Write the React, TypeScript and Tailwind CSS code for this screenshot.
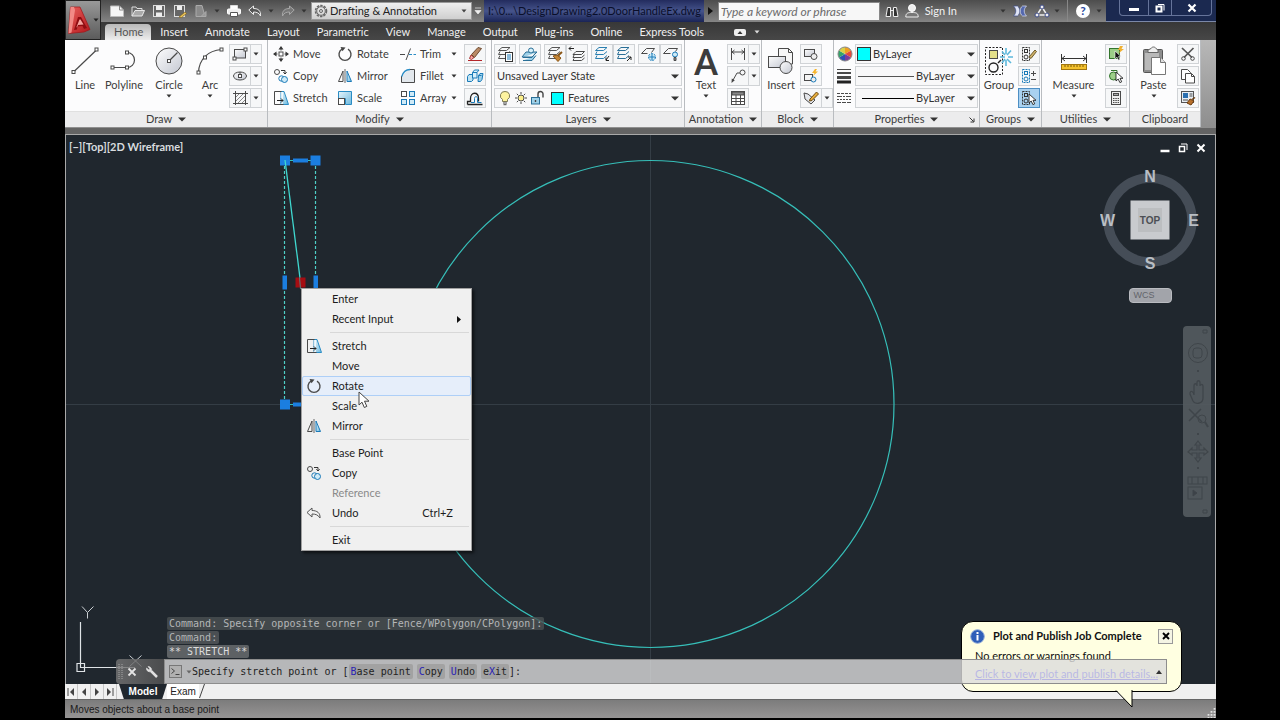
import React from "react";

type Kids = { children?: React.ReactNode };

function Svg({ w, h, children, className = "" }: Kids & { w: number; h: number; className?: string }) {
  return (
    <svg width={w} height={h} viewBox={`0 0 ${w} ${h}`} fill="none" stroke="#4a4a4a" aria-hidden="true" className={`shrink-0 ${className}`}>
      {children}
    </svg>
  );
}

function Caret({ className = "text-[#333]" }: { className?: string }) {
  return (
    <Svg w={6} h={4} className={className}>
      <path d="M0.5 0.5h5L3 3.5z" fill="currentColor" stroke="none" />
    </Svg>
  );
}

function BigCaret() {
  return (
    <Svg w={8} h={5} className="text-[#333]">
      <path d="M0 0.5h8L4 4.5z" fill="currentColor" stroke="none" />
    </Svg>
  );
}

const node = (x: number, y: number) => <rect x={x - 1.5} y={y - 1.5} width="3" height="3" fill="#fff" />;

const grad = (
  <svg width="0" height="0" className="absolute" aria-hidden="true">
    <defs>
      <linearGradient id="metal" x1="0" y1="0" x2="1" y2="1">
        <stop offset="0" stopColor="#fdfdfd" />
        <stop offset="1" stopColor="#c4c8d2" />
      </linearGradient>
      <linearGradient id="sky" x1="0" y1="0" x2="1" y2="1">
        <stop offset="0" stopColor="#e8f6fc" />
        <stop offset="1" stopColor="#6db8dd" />
      </linearGradient>
      <linearGradient id="red" x1="0" y1="0" x2="1" y2="1">
        <stop offset="0" stopColor="#e8605c" />
        <stop offset="1" stopColor="#b3161c" />
      </linearGradient>
    </defs>
  </svg>
);

/* ---------- Draw ---------- */
const LineIcon = () => (
  <Svg w={28} h={28}>
    <path d="M2.5 25L26 2.500" strokeWidth="1.2" />
    {node(2.5, 25)}
    {node(25.5, 2.500)}
  </Svg>
);
const PolylineIcon = () => (
  <Svg w={28} h={28}>
    <path d="M2.500 20.5H17a7.500 7.500 0 0 0 0-15h-.5" strokeWidth="1.2" />
    {node(2.5, 20.5)}
    {node(17, 20.5)}
    {node(17, 5.5)}
  </Svg>
);
const CircleIcon = () => (
  <Svg w={28} h={28}>
    <circle cx="14" cy="14" r="13" fill="url(#metal)" />
    <path d="M14 14l8.500-8.500" strokeWidth="1.2" />
    {node(14, 14)}
  </Svg>
);
const ArcIcon = () => (
  <Svg w={28} h={28}>
    <path d="M2.500 25.500C3 12 12 3.500 25.500 2.500" strokeWidth="1.2" />
    {node(2.5, 25.5)}
    {node(9, 10.5)}
    {node(25.5, 2.5)}
  </Svg>
);
const RectIcon = () => (
  <Svg w={16} h={14}>
    <rect x="2.500" y="2.500" width="11" height="8.500" fill="url(#metal)" />
    {node(2.5, 11.5)}
    {node(13.5, 2.5)}
  </Svg>
);
const EllipseIcon = () => (
  <Svg w={16} h={14}>
    <ellipse cx="8" cy="7" rx="6.500" ry="4" fill="url(#metal)" />
    <path d="M8 7V3" />
    {node(8, 7)}
  </Svg>
);
const HatchIcon = () => (
  <Svg w={16} h={14}>
    <path d="M3.500 0v14M13.500 0v14M1 2.500h15M1 12.500h15" />
    <path d="M4 6l3-3M4 10l7-7M6 12l7-7M10 12l3-3" stroke="#888" />
  </Svg>
);

/* ---------- Modify ---------- */
const MoveIcon = () => (
  <Svg w={16} h={16}>
    <rect x="6" y="6" width="4" height="4" />
    <path d="M8 0l2.500 3.500h-5zM8 16l2.500-3.500h-5zM0 8l3.500-2.500v5zM16 8l-3.500-2.500v5z" fill="#333" stroke="none" />
    <path d="M8 2.500v2M8 11.500v2M2.500 8h2M11.500 8h2" />
  </Svg>
);
const CopyIcon = () => (
  <Svg w={16} h={16}>
    <circle cx="4" cy="4" r="2.500" />
    <circle cx="8.500" cy="10.500" r="2.700" stroke="#1a7ab8" />
    <circle cx="11.500" cy="11.500" r="3" stroke="#1a7ab8" fill="#cfeaf7" />
    <path d="M8 2.500h4v3M10.300 4.300L12 6l1.700-1.700" stroke="#333" />
  </Svg>
);
const StretchIcon = () => (
  <Svg w={16} h={16}>
    <path d="M8 1.500h3L15.500 14.500H8z" fill="url(#sky)" stroke="#2a8cc4" />
    <path d="M8.500 1.500h-7v13h9" />
    <path d="M9 2v12" stroke="#fff" strokeWidth="1.500" />
    <path d="M4 10.500h6M8 8.500l2 2-2 2" stroke="#222" />
  </Svg>
);
const RotateIcon = () => (
  <Svg w={16} h={16}>
    <path d="M11 3.200A6 6 0 1 1 5 3.200" strokeWidth="1.400" />
    <path d="M3.500 1l5 .6-3 3.600z" fill="#444" stroke="none" />
  </Svg>
);
const MirrorIcon = () => (
  <Svg w={16} h={16}>
    <path d="M6 3v10.500H1.500z" />
    <path d="M10 3v10.500h4.500z" fill="url(#sky)" stroke="#1a7ab8" />
    <path d="M8 1v14" stroke="#666" />
  </Svg>
);
const ScaleIcon = () => (
  <Svg w={16} h={16}>
    <path d="M1.500 1.500h13v13h-6v-6h-7z" fill="url(#sky)" stroke="#2a8cc4" />
    <rect x="1.500" y="8.500" width="6" height="6" fill="#fff" />
  </Svg>
);
const TrimIcon = () => (
  <Svg w={16} h={16}>
    <path d="M0 8.500h5M10.500 2.500L6 14" />
    <path d="M9 8.500h7" stroke="#2a8cc4" strokeDasharray="3 1.500" />
  </Svg>
);
const FilletIcon = () => (
  <Svg w={16} h={16}>
    <path d="M1.500 15C1.500 6 6 1.500 14.500 1.500V15z" fill="#e3e8ed" stroke="none" />
    <path d="M1.500 9C3 4 6 1.500 10 1.500" stroke="#2a8cc4" strokeWidth="1.300" />
    <path d="M1.500 8.500v6h13v-13H10" />
  </Svg>
);
const ArrayIcon = () => (
  <Svg w={16} h={16}>
    <rect x="1.500" y="1.500" width="5" height="5" fill="#fff" />
    <rect x="9.500" y="1.500" width="5" height="5" fill="#cfeaf7" stroke="#1a7ab8" />
    <rect x="1.500" y="9.500" width="5" height="5" fill="#cfeaf7" stroke="#1a7ab8" />
    <rect x="9.500" y="9.500" width="5" height="5" fill="#cfeaf7" stroke="#1a7ab8" />
  </Svg>
);
const EraseIcon = () => (
  <Svg w={16} h={16}>
    <path d="M1 14.500h14" stroke="#b3262a" />
    <path d="M2.500 12.500L4 9l3 2.500-2.500 2z" fill="#f3a9a0" stroke="#a33" />
    <path d="M4.500 8.500L11 1.500l3.500 1-7 9z" fill="#b98a66" stroke="#6e4a30" />
  </Svg>
);
const ExplodeIcon = () => (
  <Svg w={18} h={16} className="text-[#1a7ab8]">
    <path d="M1.500 8.500l1.500-2h4V12l-1.500 1.500h-4z" fill="#bfe3f3" stroke="currentColor" />
    <path d="M6.500 4.500l2-2.500H13l-2 2.500V10H6.500zM11 4.500H6.500" fill="#d9f0fa" stroke="currentColor" />
    <path d="M12.500 7.500l1.500-2h3l-1 6-1.500 2h-2.500zM12.500 7.500h3" fill="#9fd2ea" stroke="currentColor" />
  </Svg>
);
const OffsetIcon = () => (
  <Svg w={18} h={16}>
    <path d="M1.500 14.500h15M1.500 14.500V11.500h3V8.500c0-7 8-7 8 0v3" stroke="#222" strokeWidth="1.300" />
    <path d="M5 12.500h3.500V8.500c0-2.500 3-2.500 3 0V12.500h4" stroke="#1a7ab8" />
  </Svg>
);

/* ---------- Layers ---------- */
function Sheets({ tone = "#555", children }: Kids & { tone?: string }) {
  return (
    <Svg w={18} h={16}>
      <path d="M6 1.500h8l-3.500 3h-8zM4 5.500l-1.500 3h8l3.500-3M4 9.500l-1.500 3h8l3.500-3" stroke={tone} fill="none" />
      {children}
    </Svg>
  );
}
const LayerProps = () => (
  <Sheets>
    <rect x="9.500" y="6.500" width="7" height="9" fill="#fff" stroke="#333" />
    <path d="M11 9h4M11 11h4M11 13h4" stroke="#1a7ab8" />
  </Sheets>
);
const LayerOff = () => (
  <Svg w={18} h={16}>
    <path d="M2 14.500h9l4-5M2 11.500h9l4-5M5 6h11l-5 5H1z" fill="#9fd2ea" stroke="#2a6f97" />
    <circle cx="10" cy="4.500" r="2.500" fill="#d7f0fa" stroke="#2a6f97" />
  </Svg>
);
const LayerMatch = () => (
  <Sheets>
    <path d="M7 10l4-1 4 3-3 3.500z" fill="#c58636" stroke="#8a5413" />
    <path d="M12 9.500L16 6" stroke="#8a5413" strokeWidth="2" />
  </Sheets>
);
const LayerPrev = () => (
  <Svg w={18} h={16}>
    <path d="M8 5.500h8.500l-3 3H5zM6 9l-1 2.500h8.500l3-2.500M6 12.500l-1 2h8.500l3-2.500" />
    <path d="M1 2.500h5M3 .5l-2 2 2 2" stroke="#222" />
  </Svg>
);
const LayerIso = () => (
  <Sheets tone="#2a7fb0">
    <path d="M16 10l-3 4M13 11.500V14.500h3" stroke="#222" />
  </Sheets>
);
const LayerUniso = () => (
  <Sheets tone="#2a6f97">
    <path d="M12 15l4-4M13 11h3v3" stroke="#222" />
  </Sheets>
);
const LayerFreeze = () => (
  <Svg w={18} h={16}>
    <path d="M1.500 7.500h6M1.500 7.500l5-5h8l-3 4" />
    <circle cx="12" cy="11" r="3.500" fill="#cdeaf6" stroke="#1a7ab8" strokeDasharray="2 1" />
    <path d="M12 8v6M9 11h6" stroke="#1a7ab8" />
  </Svg>
);
const LayerLamp = () => (
  <Svg w={18} h={16}>
    <path d="M1.500 7.500h7M1.500 7.500l5-5h9l-2 3" />
    <circle cx="13" cy="8.500" r="2.500" fill="#cdeaf6" stroke="#1a7ab8" />
    <path d="M12 11.500h2v3h-2z" fill="#888" />
  </Svg>
);
const Bulb = () => (
  <Svg w={14} h={16}>
    <path d="M7 1.500a4.300 4.300 0 0 0-2.500 8v2h5v-2A4.300 4.300 0 0 0 7 1.500z" fill="#fdf3a0" stroke="#7d7a55" />
    <path d="M5 13h4M5.500 14.700h3" />
  </Svg>
);
const Sun = () => (
  <Svg w={14} h={16}>
    <circle cx="7" cy="8" r="3" fill="#fdf08a" />
    <path d="M7 2v2M7 12v2M1 8h2M11 8h2M2.800 3.800l1.400 1.400M9.800 10.800l1.400 1.400M2.800 12.200l1.400-1.400M9.800 5.200l1.400-1.400" />
  </Svg>
);
const Lock = () => (
  <Svg w={15} h={16}>
    <rect x="1.500" y="7.500" width="8" height="6.500" fill="#9fd2ea" stroke="#2a6f97" />
    <path d="M8 7V4a2.500 2.500 0 0 1 5 0v3.500M5.500 10v2" stroke="#444" strokeWidth="1.400" />
  </Svg>
);

/* ---------- Annotation / Block ---------- */
const DimIcon = () => (
  <Svg w={16} h={14}>
    <path d="M1.500 1v12M14.500 1v12M2 5h12M4.500 3L2 5l2.500 2M11.500 3L14 5l-2.500 2" />
  </Svg>
);
const LeaderIcon = () => (
  <Svg w={16} h={14}>
    <circle cx="12.500" cy="3.500" r="2.500" />
    <path d="M10 4H7L2.500 12" />
    <path d="M1.500 14l.3-4.500 3 1.700z" fill="#444" stroke="none" />
  </Svg>
);
const TableIcon = () => (
  <Svg w={16} h={14}>
    <rect x="1.500" y=".5" width="13" height="13" fill="#fff" />
    <path d="M2 1h12v3H2z" fill="#888" />
    <path d="M1.500 7.500h13M1.500 10.500h13M6 4v9M10.500 4v9" />
  </Svg>
);
const InsertIcon = () => (
  <Svg w={28} h={28}>
    <path d="M11.500 1.500h10l4 4V17h-14z" fill="#f6f6f6" />
    <path d="M21.500 1.500v4h4" />
    <rect x="1.500" y="9.500" width="17" height="11" fill="url(#metal)" />
    <circle cx="19" cy="20.500" r="6" fill="url(#metal)" />
  </Svg>
);
const BlockCreate = () => (
  <Svg w={16} h={14}>
    <rect x="1.500" y="2.500" width="10" height="7" fill="url(#metal)" />
    <circle cx="11" cy="9.500" r="3" fill="#eee" />
  </Svg>
);
const BlockEdit = () => (
  <Svg w={16} h={14}>
    <rect x="1.500" y="5.500" width="8" height="6" fill="#f4f4f4" />
    <circle cx="10.500" cy="10.500" r="2.500" fill="#eee" stroke="#1a7ab8" />
    <path d="M12 0l-3 4h2.500L10 7l5-4.500h-2.500L14 0z" fill="#f7b52c" stroke="none" />
  </Svg>
);
const AttrEdit = () => (
  <Svg w={16} h={14}>
    <path d="M1 2l4 1 7 6-4 4-6-5z" fill="#e4e6ea" />
    <path d="M7 8l6.500-7 2 2L9 9.500 6.500 10z" fill="#e7ad3b" stroke="#6c4b13" />
  </Svg>
);

/* ---------- Properties ---------- */
const Wheel = () => (
  <Svg w={16} h={16}>
    <g stroke="none">
      <path d="M8 8L8 1a7 7 0 0 1 6 3.500z" fill="#f0a021" />
      <path d="M8 8l6-3.500a7 7 0 0 1 0 7z" fill="#e54b3c" />
      <path d="M8 8l6 3.500A7 7 0 0 1 8 15z" fill="#7d3b9e" />
      <path d="M8 8v7a7 7 0 0 1-6-3.500z" fill="#2b53b5" />
      <path d="M8 8l-6 3.500a7 7 0 0 1 0-7z" fill="#35a36b" />
      <path d="M8 8L2 4.500A7 7 0 0 1 8 1z" fill="#d8d04a" />
    </g>
    <circle cx="8" cy="8" r="7" stroke="#888" />
  </Svg>
);
const Weights = () => (
  <Svg w={14} h={16}>
    <path d="M0 1.500h14" />
    <path d="M0 5h14" strokeWidth="2" />
    <path d="M0 9.500h14" strokeWidth="3" />
    <path d="M0 14h14" strokeWidth="3" stroke="#222" />
  </Svg>
);
const LineTypes = () => (
  <Svg w={14} h={16}>
    <path d="M0 3.500h14" strokeDasharray="3 1" />
    <path d="M0 6.500h14" strokeDasharray="5 1 2 1" />
    <path d="M0 9.500h14" strokeDasharray="2 1" />
    <path d="M0 12.500h14" strokeDasharray="4 1" />
  </Svg>
);

/* ---------- Groups / Utilities / Clipboard ---------- */
const GroupIcon = () => (
  <Svg w={30} h={30}>
    <rect x="1.500" y="1.500" width="17" height="27" stroke="#222" strokeDasharray="2 1.500" />
    <rect x="5.500" y="4.500" width="8" height="8" fill="#e4e08a" />
    <circle cx="9.500" cy="21.500" r="4.500" stroke="#222" strokeWidth="1.400" />
    <path d="M14 17l3-3" stroke="#222" strokeWidth="1.500" />
    <path d="M22 2v6M22 14v6M16 11h5M24 11h5M18 5.500l3 3.500M27 4.500l-4 4.500M18 17l3-4M27 17l-4-4" stroke="#5cb8dc" strokeWidth="1.600" />
  </Svg>
);
const Boxes = ({ tone = "#333", children }: Kids & { tone?: string }) => (
  <Svg w={16} h={16}>
    <path d="M1.500 1.500h7v13h-7z" stroke={tone} strokeDasharray="2 1" />
    <rect x="3.500" y="3.500" width="3" height="3" stroke={tone} />
    <circle cx="5" cy="11" r="2" stroke={tone} />
    {children}
  </Svg>
);
const Arrow = () => <path d="M8 4v9l2.200-2 1.700 3.600 1.800-.8L12 10.300h3z" fill="#fff" stroke="#222" strokeWidth=".9" />;
const MeasureIcon = () => (
  <Svg w={28} h={28}>
    <path d="M1.500 7v9M26.500 7v9M2 11.500h24M5 9L2 11.500l3 2.500M23 9l3 2.500-3 2.500" stroke="#333" />
    <rect x="1.500" y="17.500" width="25" height="5" fill="#f3c12e" stroke="#a3770f" />
    <path d="M5 18v2M8 18v2M11 18v2M14 18v2M17 18v2M20 18v2M23 18v2" stroke="#7c5a08" />
  </Svg>
);
const SelectAll = () => (
  <Svg w={16} h={16}>
    <rect x="1.500" y="2.500" width="10" height="10" fill="#9ccf88" stroke="#33752c" />
    <path d="M12 0l-2 4h2l-1 3 5-4h-2.500L15 0z" fill="#f0b030" stroke="none" />
    <path d="M7 5v8l2-1.800 1.500 3 1.500-.7-1.400-2.900H13z" fill="#111" stroke="#fff" strokeWidth=".6" />
  </Svg>
);
const QuickSelect = () => (
  <Svg w={16} h={16}>
    <circle cx="5.500" cy="8" r="4" fill="#9ccf88" stroke="#33752c" />
    <path d="M3 2.500h6v6" stroke="#33752c" />
    <Arrow />
  </Svg>
);
const CalcIcon = () => (
  <Svg w={16} h={16}>
    <rect x="3.500" y="1.500" width="9" height="13" fill="#eee" />
    <rect x="5.500" y="3.500" width="5" height="2" fill="#aaa" />
    <path d="M5 8.500h6M5 10.500h6M5 12.500h6" strokeDasharray="1.500 .8" />
  </Svg>
);
const PasteIcon = () => (
  <Svg w={28} h={30}>
    <rect x="3.500" y="3.500" width="19" height="23" rx="1" fill="#8d8d8d" stroke="#555" />
    <rect x="5" y="7" width="14" height="17" fill="#b9b9b9" stroke="none" />
    <path d="M8 6.500V4l3-1.500c1-2 4-2 5 0L18 4v2.500z" fill="#eee" stroke="#666" />
    <path d="M11.500 11.500h9l5 5v12h-14z" fill="#fff" stroke="#777" />
    <path d="M20.500 11.500v5h5" fill="#ddd" stroke="#777" />
  </Svg>
);
const CutIcon = () => (
  <Svg w={16} h={16}>
    <path d="M2 2l10 9.500M13.500 2L4 11.500" stroke="#555" strokeWidth="1.700" />
    <circle cx="3.500" cy="12.500" r="1.800" />
    <circle cx="12.500" cy="12.500" r="1.800" />
  </Svg>
);
const CopyClip = () => (
  <Svg w={16} h={16}>
    <path d="M1.500 1.500h6l3 3v7h-9z" fill="#fff" />
    <path d="M5.500 5.500h6l3 3v6.500h-9z" fill="#fff" />
    <path d="M11.500 5.500v3h3" />
  </Svg>
);
const MatchProp = () => (
  <Svg w={16} h={16}>
    <rect x="1.500" y="1.500" width="12" height="11" fill="#e8eef4" stroke="#555" />
    <rect x="3" y="3" width="5" height="5" fill="#2a6fb0" stroke="none" />
    <path d="M9.500 4h3M9.500 6h3M3 10h5" />
    <path d="M7 13l3-4 4 2-3 4z" fill="#b8702c" stroke="#6b3c0f" />
    <path d="M12 9.500l3-2" stroke="#6b3c0f" strokeWidth="1.500" />
  </Svg>
);

/* ---------- Building blocks ---------- */
const box = "flex h-5 items-center justify-center border border-[#d0d3d6] bg-[#f6f7f8]";

function Big({ label, icon, caret = false, className }: { label: string; icon: React.ReactNode; caret?: boolean; className: string }) {
  return (
    <button className={`flex flex-col items-center pt-px text-[#3c3c3c] ${className}`}>
      <span className="flex h-8 items-center">{icon}</span>
      <span className="mt-px leading-[14px]">{label}</span>
      {caret && <Caret className="mt-0.5 text-[#333]" />}
    </button>
  );
}

function Small({ label, icon, className = "w-[22px]" }: { label: string; icon: React.ReactNode; className?: string }) {
  return (
    <button aria-label={label} className={`${box} ${className}`}>
      {icon}
    </button>
  );
}

function Split({ label, icon }: { label: string; icon: React.ReactNode }) {
  return (
    <div className="flex">
      <Small label={label} icon={icon} />
      <button aria-label={`${label} options`} className={`${box} w-[11px] border-l-0`}>
        <Caret />
      </button>
    </div>
  );
}

function Row({ label, icon, caret = false }: { label: string; icon: React.ReactNode; caret?: boolean }) {
  return (
    <button className="flex h-5 w-full items-center gap-1 text-left text-[#3c3c3c]">
      {icon}
      <span className="flex-1">{label}</span>
      {caret && <Caret />}
    </button>
  );
}

function Panel({ title, className, children, caret = true, launcher = false }: Kids & { title: string; className: string; caret?: boolean; launcher?: boolean }) {
  return (
    <section aria-label={title} className={`flex shrink-0 flex-col border-r border-[#b9bcc0] bg-[#fcfcfd] ${className}`}>
      <div className="flex h-[71px] items-start pt-1">{children}</div>
      <h2 className="relative flex h-4 items-center justify-center gap-1.5 border-t border-[#e0e0e0] bg-[#ececed] text-[#3c3c3c]">
        {title}
        {caret && <BigCaret />}
        {launcher && (
          <Svg w={6} h={6} className="absolute right-1 bottom-1">
            <path d="M.5 .5l4 4M5 1.500V5H1.500" stroke="#333" />
          </Svg>
        )}
      </h2>
    </section>
  );
}

function Pick({ label, value, before, className = "" }: { label: string; value: string; before?: React.ReactNode; className?: string }) {
  return (
    <label className={`flex h-5 min-w-0 items-center border border-[#d0d3d6] bg-[#f8f8f9] pr-0.5 text-[#333] ${className}`}>
      {before}
      <select aria-label={label} className="min-w-0 flex-1 appearance-none bg-transparent outline-none">
        <option>{value}</option>
      </select>
      <BigCaret />
    </label>
  );
}

/* ---------- Title bar ---------- */
function Quick({ label, children, className = "w-[21px]" }: Kids & { label: string; className?: string }) {
  return (
    <button aria-label={label} className={`flex h-full shrink-0 items-center justify-center ${className}`}>
      {children}
    </button>
  );
}

function TitleBar() {
  return (
    <header className="flex h-[22px] items-center bg-linear-to-b from-[#4d4d4d] to-[#858585] text-[11px] text-[#f2f2f2]">
      <div className="flex h-full shrink-0 items-center pl-[5px]">
        <Quick label="New">
          <Svg w={14} h={14}><path d="M.5 2h9l4 4v6.500H.5z" fill="#f5f5f5" stroke="#bbb" /><path d="M9.500 2v4h4" stroke="#888" /></Svg>
        </Quick>
        <Quick label="Open">
          <Svg w={14} h={14}><path d="M1 12V3h4l1 1.500h5V7" stroke="#ddd" /><path d="M1 12l3-5.500h9.500L11 12z" fill="#aaa" stroke="#e8e8e8" /></Svg>
        </Quick>
        <Quick label="Save">
          <Svg w={14} h={14}><rect x="1.500" y="1.500" width="11" height="11" fill="#666" stroke="#ddd" /><path d="M4 2h6v4H4zM4 8.500h6v4H4z" fill="#eee" stroke="none" /></Svg>
        </Quick>
        <Quick label="Save As">
          <Svg w={14} h={14}><rect x="1.500" y="1.500" width="10" height="11" fill="#666" stroke="#ddd" /><path d="M4 2h5v4H4z" fill="#eee" stroke="none" /><path d="M6 13l6-5 1.500 1.500-5 4z" fill="#e9c35a" stroke="#7a5a14" strokeWidth=".6" /></Svg>
        </Quick>
        <Quick label="Plot preview">
          <Svg w={14} h={14}><path d="M2 1.500h6l3 11H2z" fill="#8a8a8a" stroke="#aaa" /><path d="M7 12.500l5-5v5z" fill="#999" stroke="#aaa" /></Svg>
        </Quick>
        <Quick label="More" className="w-3"><Caret className="text-[#333]" /></Quick>
        <Quick label="Plot">
          <Svg w={14} h={14}><path d="M3.500 5V1.500h7V5" fill="#fff" stroke="#ddd" /><rect x=".5" y="5" width="13" height="5" rx="1" fill="#eee" stroke="#fff" /><path d="M3.500 8.500h7v4h-7z" fill="#fff" stroke="#555" /></Svg>
        </Quick>
        <Quick label="Undo">
          <Svg w={14} h={12}><path d="M.8 5L5.500 1v2.500C10 3.500 13 5.500 12.500 11 11 8 9 7 5.500 7v2.500z" fill="#555" stroke="#eee" /></Svg>
        </Quick>
        <Quick label="Undo list" className="w-3"><Caret className="text-[#333]" /></Quick>
        <Quick label="Redo">
          <Svg w={14} h={12}><path d="M13.200 5L8.500 1v2.500C4 3.500 1 5.500 1.500 11 3 8 5 7 8.500 7v2.500z" fill="#777" stroke="#a8a8a8" /></Svg>
        </Quick>
        <Quick label="Redo list" className="w-3"><Caret className="text-[#333]" /></Quick>
      </div>
      <label className="ml-px flex h-[18px] w-[161px] shrink-0 items-center border border-[#999] bg-linear-to-b from-[#efefef] to-[#cfcfcf] pr-1 pl-0.5 text-[#222]">
        <Svg w={14} h={14}>
          <circle cx="7" cy="7" r="5.500" strokeWidth="1.600" strokeDasharray="2.400 1.100" stroke="#666" />
          <circle cx="7" cy="7" r="4.300" stroke="#666" />
          <circle cx="7" cy="7" r="1.500" stroke="#666" />
        </Svg>
        <select aria-label="Workspace" className="min-w-0 flex-1 appearance-none bg-transparent pl-0.5 outline-none">
          <option>Drafting &amp; Annotation</option>
        </select>
        <Caret className="text-[#444]" />
      </label>
      <Quick label="Customize" className="w-3">
        <Svg w={8} h={8}><path d="M1 1h6M1 3.500h6L4 7z" fill="#eee" stroke="#eee" strokeWidth=".7" /></Svg>
      </Quick>
      <h1 className="flex h-full min-w-0 flex-1 items-center overflow-hidden bg-linear-to-b from-[#232c5e] via-[#46548c] to-[#1a2456] pl-1 whitespace-nowrap text-[#0a0f2a]">
        I:\0...\DesignDrawing2.0DoorHandleEx.dwg
      </h1>
      <div className="flex h-full shrink-0 items-center">
        <Quick label="Show search" className="w-3.5">
          <Svg w={5} h={8}><path d="M0 0l5 4-5 4z" fill="#111" stroke="none" /></Svg>
        </Quick>
        <input aria-label="Search" placeholder="Type a keyword or phrase" className="h-[19px] w-[162px] border border-[#888] bg-[#f7f7f7] px-0.5 text-[12px] text-[#333] italic placeholder:text-[#6b6b6b]" />
        <Quick label="Find" className="w-[25px]">
          <Svg w={14} h={14}><path d="M1 12.500l1.500-9h3v9zM8.500 12.500v-9h3l1.500 9z" fill="#333" stroke="#eee" /><path d="M5.500 6.500h3" stroke="#eee" /></Svg>
        </Quick>
        <button className="flex items-center gap-1.5">
          <Svg w={14} h={16}><circle cx="7" cy="5" r="3.500" fill="#eee" stroke="#fff" /><path d="M.8 14c0-4 2-4.500 6.200-4.500s6.200.5 6.200 4.500z" fill="#777" stroke="#eee" /></Svg>
          Sign In
        </button>
        <Quick label="Account" className="ml-10 w-3"><Caret className="text-[#333]" /></Quick>
        <Quick label="Exchange" className="w-[22px]">
          <Svg w={14} h={12}><path d="M.5 1h4c3 2 3 8 0 10h-4c3-3 3-7 0-10z" fill="#dfe4f5" stroke="#3c4a86" strokeWidth=".7" /><path d="M13.500 1h-4c-3 2-3 8 0 10h4c-3-3-3-7 0-10z" fill="#5468ae" stroke="#dfe4f5" strokeWidth=".7" /></Svg>
        </Quick>
        <Quick label="Autodesk 360" className="w-[21px]">
          <Svg w={16} h={14}><path d="M8 3L3 11h10z" stroke="#eee" strokeWidth="1.500" /><circle cx="8" cy="3" r="2" fill="#eee" stroke="#3c4a86" /><circle cx="3" cy="11" r="2" fill="#eee" stroke="#3c4a86" /><circle cx="13" cy="11" r="2" fill="#eee" stroke="#3c4a86" /></Svg>
        </Quick>
        <Quick label="Autodesk 360 menu" className="w-[9px]"><Caret className="text-[#333]" /></Quick>
        <div className="ml-1.5 h-full w-px bg-[#888]" />
        <Quick label="Help" className="ml-1 w-[22px]">
          <span className="flex size-3.5 items-center justify-center rounded-full bg-white text-[12px] leading-none font-bold text-[#2c49a0]">?</span>
        </Quick>
        <Quick label="Help menu" className="mr-0.5 w-[10px]"><Caret className="text-[#333]" /></Quick>
      </div>
      <div className="flex h-full w-[110px] shrink-0 items-start justify-end border-b border-[#7b88a8] bg-[#1b2950] pr-1">
        <div className="flex h-4 w-[93px] rounded-b border border-t-0 border-[#66749a]">
          <button aria-label="Minimize" className="flex w-7 items-center justify-center pt-1"><span className="h-[3px] w-2.5 bg-white" /></button>
          <button aria-label="Restore" className="flex w-6 items-center justify-center border-x border-[#66749a]">
            <Svg w={10} h={10}><path d="M3 1.500h6v6" stroke="#fff" /><rect x="1.500" y="3.500" width="5" height="5" stroke="#fff" strokeWidth="2" /></Svg>
          </button>
          <button aria-label="Close" className="flex flex-1 items-center justify-center">
            <Svg w={10} h={10}><path d="M1.500 1.500l7 7M8.500 1.500l-7 7" stroke="#fff" strokeWidth="2.200" /></Svg>
          </button>
        </div>
      </div>
    </header>
  );
}

const tabs = ["Home", "Insert", "Annotate", "Layout", "Parametric", "View", "Manage", "Output", "Plug-ins", "Online", "Express Tools"];

function Tabs() {
  return (
    <nav aria-label="Ribbon" className="flex h-[18px] items-end bg-linear-to-b from-[#383838] to-[#474747] pl-1 text-[11px] text-[#f0f0f0]">
      {tabs.map((t) => (
        <button
          key={t}
          className={
            t === "Home"
              ? "h-4 rounded-t-sm bg-linear-to-b from-[#b9b9b9] to-[#ededed] pr-2 pl-[9px] leading-[14px] text-[#555]"
              : "h-4 pr-2 pl-[9px] leading-[14px]"
          }
        >
          {t}
        </button>
      ))}
      <button aria-label="Minimize ribbon" className="ml-[22px] flex h-4 items-center gap-2">
        <Svg w={12} h={7}><rect width="12" height="7" rx="2" fill="#eee" stroke="none" /><path d="M6 2l2.500 3h-5z" fill="#333" stroke="none" /></Svg>
        <Caret className="text-[#ddd]" />
      </button>
    </nav>
  );
}

function Ribbon() {
  const col = "flex flex-col gap-0.5";
  const swatch = "shrink-0 border border-[#333] bg-[#00ffff]";
  return (
    <div className="flex border-b border-[#8f8f8f] bg-linear-to-b from-[#b8b8b8] to-[#8e8e8e] text-[11px]">
      <Panel title="Draw" className="w-[203px]">
        <Big label="Line" icon={<LineIcon />} className="ml-1 w-8" />
        <Big label="Polyline" icon={<PolylineIcon />} className="w-[46px]" />
        <Big label="Circle" icon={<CircleIcon />} caret className="w-[44px]" />
        <Big label="Arc" icon={<ArcIcon />} caret className="w-[38px]" />
        <div className={col}>
          <Split label="Rectangle" icon={<RectIcon />} />
          <Split label="Ellipse" icon={<EllipseIcon />} />
          <Split label="Hatch" icon={<HatchIcon />} />
        </div>
      </Panel>
      <Panel title="Modify" className="w-[224px]">
        <div className={`${col} ml-[5px] w-16`}>
          <Row label="Move" icon={<MoveIcon />} />
          <Row label="Copy" icon={<CopyIcon />} />
          <Row label="Stretch" icon={<StretchIcon />} />
        </div>
        <div className={`${col} w-[63px]`}>
          <Row label="Rotate" icon={<RotateIcon />} />
          <Row label="Mirror" icon={<MirrorIcon />} />
          <Row label="Scale" icon={<ScaleIcon />} />
        </div>
        <div className={`${col} w-[57px]`}>
          <Row label="Trim" icon={<TrimIcon />} caret />
          <Row label="Fillet" icon={<FilletIcon />} caret />
          <Row label="Array" icon={<ArrayIcon />} caret />
        </div>
        <div className={`${col} ml-[7px]`}>
          <Small label="Erase" icon={<EraseIcon />} />
          <Small label="Explode" icon={<ExplodeIcon />} />
          <Small label="Offset" icon={<OffsetIcon />} />
        </div>
      </Panel>
      <Panel title="Layers" className="w-[193px]">
        <div className={`${col} w-full px-0.5`}>
          <div className="flex justify-between">
            <Small label="Layer properties" icon={<LayerProps />} />
            <Small label="Layer off" icon={<LayerOff />} />
            <div className="flex">
              <Small label="Match layer" icon={<LayerMatch />} />
              <Small label="Previous layer" icon={<LayerPrev />} />
            </div>
            <div className="flex">
              <Small label="Isolate" icon={<LayerIso />} />
              <Small label="Unisolate" icon={<LayerUniso />} />
            </div>
            <div className="flex">
              <Small label="Freeze" icon={<LayerFreeze />} />
              <Small label="Turn off" icon={<LayerLamp />} />
            </div>
          </div>
          <Pick label="Layer state" value="Unsaved Layer State" className="pl-0.5" />
          <Pick
            label="Layer"
            value="Features"
            before={
              <span className="flex items-center gap-0.5 pr-1 pl-[3px]">
                <Bulb />
                <Sun />
                <Lock />
                <span className={`ml-1 size-[13px] ${swatch}`} />
              </span>
            }
          />
        </div>
      </Panel>
      <Panel title="Annotation" className="w-[77px]">
        <Big label="Text" caret className="w-[42px]" icon={<span className="pt-1 font-['Roboto',sans-serif] text-[37px] leading-8 font-medium">A</span>} />
        <div className={col}>
          <Split label="Dimension" icon={<DimIcon />} />
          <Split label="Leader" icon={<LeaderIcon />} />
          <Small label="Table" icon={<TableIcon />} />
        </div>
      </Panel>
      <Panel title="Block" className="w-[72px]">
        <Big label="Insert" className="w-[38px]" icon={<InsertIcon />} />
        <div className={col}>
          <Small label="Create block" icon={<BlockCreate />} />
          <Small label="Block editor" icon={<BlockEdit />} />
          <Split label="Edit attributes" icon={<AttrEdit />} />
        </div>
      </Panel>
      <Panel title="Properties" className="w-[146px]" launcher>
        <div className={`${col} w-full pr-px pl-[3px]`}>
          <div className="flex items-center gap-0.5">
            <Wheel />
            <Pick label="Object color" value="ByLayer" className="flex-1 pl-px" before={<span className={`mr-0.5 size-3.5 ${swatch}`} />} />
          </div>
          <div className="flex items-center gap-1">
            <Weights />
            <Pick label="Lineweight" value="ByLayer" className="flex-1 pl-0.5" before={<span className="mr-0.5 h-px w-14 bg-[#555]" />} />
          </div>
          <div className="flex items-center gap-1">
            <LineTypes />
            <Pick label="Linetype" value="ByLayer" className="flex-1 pl-1.5" before={<span className="mr-0.5 h-px w-13 bg-black" />} />
          </div>
        </div>
      </Panel>
      <Panel title="Groups" className="w-[62px]">
        <Big label="Group" className="w-[38px]" icon={<GroupIcon />} />
        <div className={col}>
          <Small label="Ungroup" icon={<Boxes><path d="M8 11l6-7 1.500 1.500-5.500 7z" fill="#d0b26a" stroke="#6b5a2a" /></Boxes>} />
          <Small label="Edit group" icon={<Boxes tone="#1a7ab8"><path d="M10 5.500h5M12.500 3v5M10 11.500h5" /></Boxes>} />
          <button aria-label="Group selection" aria-pressed="true" className="flex h-5 w-[22px] items-center justify-center border border-[#4d8fc4] bg-[#a9d1f0]">
            <Boxes><Arrow /></Boxes>
          </button>
        </div>
      </Panel>
      <Panel title="Utilities" className="w-[88px]">
        <Big label="Measure" caret className="w-[63px]" icon={<MeasureIcon />} />
        <div className={col}>
          <Small label="Select all" icon={<SelectAll />} />
          <Small label="Quick select" icon={<QuickSelect />} />
          <Small label="Calculator" icon={<CalcIcon />} />
        </div>
      </Panel>
      <Panel title="Clipboard" className="w-[71px]" caret={false}>
        <Big label="Paste" caret className="w-[47px]" icon={<PasteIcon />} />
        <div className={col}>
          <Small label="Cut" icon={<CutIcon />} />
          <Small label="Copy clip" icon={<CopyClip />} />
          <Small label="Match properties" icon={<MatchProp />} />
        </div>
      </Panel>
    </div>
  );
}

/* ---------- Drawing area ---------- */
function Drawing() {
  return (
    <svg viewBox="66 135 1149 549" preserveAspectRatio="xMinYMin slice" className="absolute inset-0 size-full" fill="none" aria-hidden="true">
      <path d="M650.5 135v549M66 404.500h1149" stroke="#343d45" />
      <circle cx="650.500" cy="404" r="243.500" stroke="#36bfb9" strokeWidth="1.200" />
      <path d="M284.500 161v244M315.500 161v244" stroke="#4fd0c8" strokeWidth="1.200" strokeDasharray="3 2" />
      <path d="M285 160.500h30M285 404.500h30" stroke="#36bfb9" />
      <g fill="#1b7ee0">
        <rect x="280" y="155.500" width="10" height="10" />
        <rect x="310.500" y="155.500" width="10" height="10" />
        <rect x="280" y="399.500" width="10" height="10" />
        <rect x="293" y="158.500" width="15" height="4" />
        <rect x="293" y="402.500" width="15" height="4" />
        <rect x="282.500" y="275.500" width="4.500" height="14" />
        <rect x="313.500" y="275.500" width="4.500" height="14" />
      </g>
      <path d="M285 160l15.500 122" stroke="#3fd8d0" strokeWidth="1.300" />
      <rect x="295.500" y="277.500" width="10" height="10" fill="#a50d12" />
      <path d="M299.500 277l1 12" stroke="#5b7f80" />
      <path d="M80.500 622v41M85 667.500h50M77 663.500h7.500v8H77zM80.500 663v4.500H85" stroke="#dfe3e6" strokeWidth="1.200" />
      <path d="M82 606.500l5.500 6 6-6M87.500 612.500v6M129.500 655.500l12 11M141.500 655.500l-12 11" stroke="#c9ced2" />
    </svg>
  );
}

function Compass() {
  return (
    <div className="absolute top-8 right-[15px] flex w-[100px] flex-col items-center">
      <svg width="100" height="106" viewBox="0 0 100 106" aria-label="View cube" className="font-['Liberation_Sans',sans-serif]">
        <circle cx="50" cy="53" r="42" fill="none" stroke="#454d57" strokeWidth="9.500" />
        <rect x="30.500" y="33.500" width="39" height="39" fill="#c9cbce" />
        <rect x="38" y="41" width="24" height="24" fill="#bcbec0" />
        <text x="50" y="57" textAnchor="middle" fontSize="10" fontWeight="bold" fill="#4c4f54">TOP</text>
        <g fontSize="16" fontWeight="bold" fill="#b9bec4" textAnchor="middle">
          <text x="50" y="15">N</text>
          <text x="50" y="102">S</text>
          <text x="7.500" y="59">W</text>
          <text x="93.500" y="59">E</text>
        </g>
      </svg>
      <button className="mt-[15px] h-[15px] w-[43px] rounded-sm border border-[#b9bbc0] bg-[#a2a4aa] pl-1 text-left font-['Liberation_Sans',sans-serif] text-[9px] leading-[13px] text-[#62656b]">
        WCS
      </button>
    </div>
  );
}

function NavBar() {
  return (
    <div className="absolute top-[191px] right-1 w-7 rounded-sm bg-[#555c60] opacity-90">
      <svg width="28" height="191" viewBox="0 0 28 191" fill="none" stroke="#43494e" aria-hidden="true">
        <path d="M20 4h4v3h-4zM20 184h4v3h-4z" />
        <circle cx="15" cy="27" r="9.500" />
        <rect x="10" y="22" width="9" height="10" rx="3" />
        <path d="M14 45h2M14 108h2M14 142h2" strokeWidth="2" />
        <path d="M7 68c0-5 4-2 4 1v-9c0-3 3-3 3 0v-3c0-3 3-3 3 0v3c0-2 3-2 3 0v12c0 6-8 7-10 3z" strokeWidth="1.300" />
        <path d="M6 83l13 13M18 83L6 95" strokeWidth="1.500" />
        <circle cx="19" cy="93" r="4" />
        <path d="M22 96l3 5" strokeWidth="2" />
        <path d="M15 115l3 4h-2v5h5v-2l4 4-4 3v-2h-5v5h2l-3 4-3-4h2v-5H9v2l-4-3 4-4v2h5v-5h-2z" strokeWidth="1.200" />
        <rect x="5" y="151" width="19" height="7" />
        <path d="M9 151v7M15 151v7M20 151v7" />
        <rect x="5" y="161" width="14" height="12" />
        <path d="M10 164l4 3-4 3z" fill="#40464b" />
      </svg>
    </div>
  );
}

const UndoIcon = () => (
  <Svg w={16} h={16}>
    <path d="M1 7.500l5-4.500v2.500c5 0 8.500 2.500 8 7.500-2-3-4-4-8-4v3z" stroke="#555" />
  </Svg>
);

type Item = { label: string; icon?: React.ReactNode; key2?: string; sub?: boolean; off?: boolean; hot?: boolean };
const groups: Item[][] = [
  [{ label: "Enter" }, { label: "Recent Input", sub: true }],
  [
    { label: "Stretch", icon: <StretchIcon /> },
    { label: "Move" },
    { label: "Rotate", icon: <RotateIcon />, hot: true },
    { label: "Scale" },
    { label: "Mirror", icon: <MirrorIcon /> },
  ],
  [
    { label: "Base Point" },
    { label: "Copy", icon: <CopyIcon /> },
    { label: "Reference", off: true },
    { label: "Undo", icon: <UndoIcon />, key2: "Ctrl+Z" },
  ],
  [{ label: "Exit" }],
];

function ContextMenu() {
  return (
    <div role="menu" className="absolute top-[153px] left-[235px] z-10 w-[171px] border border-[#a0a0a0] bg-[#f0f0f0] text-[11px] text-[#1c1c1c] shadow-[2px_2px_3px_#00000099]">
      {groups.map((g, i) => (
        <div key={i} className={i > 0 ? "relative pt-[7px] before:absolute before:top-[3px] before:right-0.5 before:left-7 before:border-t before:border-[#d8d8d8]" : ""}>
          {g.map((m) => (
            <button
              key={m.label}
              role="menuitem"
              disabled={m.off}
              className={`flex h-5 w-full items-center border pr-[17px] pl-[3px] text-left ${m.hot ? "rounded-xs border-[#aecff7] bg-[#e6eefa]" : "border-transparent"} ${m.off ? "text-[#8a8a8a]" : ""}`}
            >
              <span className="mr-2.5 flex w-4 shrink-0">{m.icon}</span>
              <span className="flex-1">{m.label}</span>
              {m.key2 && <span>{m.key2}</span>}
              {m.sub && <Svg w={4} h={7} className="-mr-2"><path d="M0 0l4 3.500L0 7z" fill="#111" stroke="none" /></Svg>}
            </button>
          ))}
        </div>
      ))}
      <svg width="12" height="18" viewBox="0 0 12 18" className="absolute top-[102px] left-14" aria-hidden="true">
        <path d="M1 1v13l3-2.800 2.300 5.300 2.500-1.100L6.500 10.200H11z" fill="#fff" stroke="#444" />
      </svg>
    </div>
  );
}

function Keyword({ pre = "", hot, post }: { pre?: string; hot: string; post: string }) {
  return (
    <button className="mr-1 rounded-xs bg-[#a2a2a2] px-0.5 text-[#222]">
      {pre}
      <span className="text-[#2a1fb4]">{hot}</span>
      {post}
    </button>
  );
}

function CommandLine() {
  const line = "mb-px w-fit rounded-xs px-0.5 leading-[13px]";
  return (
    <div className="absolute right-12 bottom-0 left-[50px] z-20 font-['DejaVu_Sans_Mono',monospace] text-[10px]">
      <div className="pl-[51px] text-[#b4b6b7]">
        <p className={`${line} bg-[#4b5153]/80`}>Command: Specify opposite corner or [Fence/WPolygon/CPolygon]:</p>
        <p className={`${line} bg-[#555a5c]/80`}>Command:</p>
        <p className={`${line} bg-[#64686a]/90 text-[#dcdcdc]`}>** STRETCH **</p>
      </div>
      <div className="flex h-[25px] items-stretch">
        <div className="flex w-12 shrink-0 items-center gap-2 rounded-l-sm bg-linear-to-r from-[#777]/80 to-[#555]/80 pl-0.5">
          <Svg w={5} h={16}><path d="M1 0v16M4 0v16" stroke="#a5a5a5" strokeDasharray="1 1" /></Svg>
          <button aria-label="Close command line" className="-ml-1"><Svg w={10} h={10}><path d="M1.500 1.500l7 7M8.500 1.500l-7 7" stroke="#e4e4e4" strokeWidth="1.800" /></Svg></button>
          <button aria-label="Settings"><Svg w={13} h={13}><path d="M12 12L6 6" stroke="#e0e0e0" strokeWidth="2.500" /><path d="M1.500 3l2.500 2L5 4 3 1.500a3.200 3.200 0 0 1 3 5 3.200 3.200 0 0 1-4.500-3.500z" fill="#e0e0e0" stroke="#e0e0e0" strokeWidth=".6" /></Svg></button>
        </div>
        <div className="flex min-w-0 flex-1 items-center border border-[#8d8d8d] bg-[#dcdcdc]/80 pl-1 text-[#222]">
          <Svg w={13} h={13}><rect x=".5" y=".5" width="12" height="12" fill="#b0b0b0" stroke="#777" /><path d="M2.500 3.500L5.500 6l-3 2.500M6.500 9.500h4" stroke="#444" /></Svg>
          <Caret className="ml-1 text-[#666]" />
          <span className="whitespace-pre">Specify stretch point or [</span>
          <Keyword hot="B" post="ase point" />
          <Keyword hot="C" post="opy" />
          <Keyword hot="U" post="ndo" />
          <Keyword pre="e" hot="X" post="it" />
          <span className="-ml-1">]:</span>
          <button aria-label="Command history" className="mr-1 ml-auto">
            <Svg w={6} h={4}><path d="M0 4h6L3 0z" fill="#333" stroke="none" /></Svg>
          </button>
        </div>
      </div>
    </div>
  );
}

function Balloon() {
  return (
    <div role="status" className="absolute right-[33px] -bottom-2 z-10 h-[71px] w-[221px] rounded-xl border border-black bg-[#ffffe1] px-2 pt-1.5 text-[11px] text-[#111]">
      <div className="flex items-center gap-2">
        <Svg w={15} h={15}><circle cx="7.500" cy="7.500" r="6.800" fill="#2f5fb8" stroke="#8fa9d8" /><path d="M7.500 6v5.500M7.500 3v2" stroke="#fff" strokeWidth="2" /></Svg>
        <strong className="flex-1 leading-4 font-bold">Plot and Publish Job Complete</strong>
        <button aria-label="Close" className="flex size-[15px] items-center justify-center border border-[#999] bg-[#f4f4e4]">
          <Svg w={8} h={8}><path d="M1 1l6 6M7 1L1 7" stroke="#000" strokeWidth="1.900" /></Svg>
        </button>
      </div>
      <p className="mt-[3px] pl-[5px] leading-[18px]">No errors or warnings found</p>
      <a href="#details" className="block pl-[5px] leading-[18px] whitespace-nowrap text-[#2a1fff] underline">Click to view plot and publish details...</a>
      <svg width="20" height="18" viewBox="0 0 20 18" className="absolute top-[68px] left-[153px]" aria-hidden="true">
        <path d="M1 0l16 17V0z" fill="#ffffe1" />
        <path d="M1 .5l16 16.500V0" fill="none" stroke="#000" />
      </svg>
    </div>
  );
}

function Canvas() {
  return (
    <main className="relative min-h-[550px] flex-1 border-x border-t border-[#a9a9a9] bg-[#20272e]">
      <Drawing />
      <p className="absolute top-1 left-[3px] text-[11px] leading-4 font-bold text-[#d8dcdf]">[−][Top][2D Wireframe]</p>
      <div className="absolute top-2 right-[9px] flex gap-2">
        <button aria-label="Minimize view"><Svg w={10} h={10}><path d="M.5 8h9" stroke="#fff" strokeWidth="2.500" /></Svg></button>
        <button aria-label="Restore view"><Svg w={10} h={10}><path d="M3 1h6v6" stroke="#fff" /><rect x="1.500" y="3.500" width="5" height="5" stroke="#fff" strokeWidth="1.500" /></Svg></button>
        <button aria-label="Close view"><Svg w={10} h={10}><path d="M1.500 1.500l7 7M8.500 1.500l-7 7" stroke="#fff" strokeWidth="2" /></Svg></button>
      </div>
      <Compass />
      <NavBar />
      <ContextMenu />
      <Balloon />
      <CommandLine />
    </main>
  );
}

function Footer() {
  const step = "flex w-[13px] items-center justify-center border-r border-[#c6c6c6]";
  return (
    <footer>
      <div className="flex h-[15px] bg-[#f0f0f0] font-['Liberation_Sans',sans-serif] text-[10px]">
        <button aria-label="First" className={step}><Svg w={8} h={8}><path d="M1 0v8" /><path d="M7 0v8L3 4z" fill="#444" stroke="none" /></Svg></button>
        <button aria-label="Previous" className={step}><Svg w={8} h={8}><path d="M6 0v8L2 4z" fill="#444" stroke="none" /></Svg></button>
        <button aria-label="Next" className={step}><Svg w={8} h={8}><path d="M2 0v8l4-4z" fill="#444" stroke="none" /></Svg></button>
        <button aria-label="Last" className={step}><Svg w={8} h={8}><path d="M7 0v8" /><path d="M1 0v8l4-4z" fill="#444" stroke="none" /></Svg></button>
        <button className="ml-0.5 w-12 bg-[#20272e] text-center leading-[14px] font-bold text-white [clip-path:polygon(0_0,100%_0,90%_100%,10%_100%)]">Model</button>
        <button className="w-8 bg-white text-center leading-[14px] text-[#222]">Exam</button>
        <Svg w={6} h={15}><path d="M5.500 0L.5 14" stroke="#444" /></Svg>
      </div>
      <div className="flex h-[19px] items-center justify-between border-t border-[#666] bg-linear-to-b from-[#7c7c7c] to-[#969494] pl-[5px] font-['Liberation_Sans',sans-serif] text-[10px] text-[#1a1a1a]">
        Moves objects about a base point
        <Svg w={12} h={12} className="self-end"><path d="M10.500 2v10M7.500 5v7M4.500 8v4" stroke="#e0e0e0" strokeWidth="1.800" strokeDasharray="1.800 1.200" /></Svg>
      </div>
    </footer>
  );
}

export default function App() {
  return (
    <div className="min-h-screen bg-black pr-16 pb-0.5 pl-[65px] font-['Lato','Noto_Sans',sans-serif]">
      {grad}
      <div className="flex min-h-[718px] flex-col">
        <div className="flex">
          <button aria-label="Application menu" className="flex w-9 shrink-0 items-center justify-center gap-0.5 border border-[#222] bg-linear-to-b from-[#999] to-[#5c5c5c]">
            <Svg w={24} h={30}>
              <path d="M3.500 2h9.500L23 24.500l-6 2.500-15.500 1.500z" fill="url(#red)" stroke="#a01418" strokeWidth=".7" />
              <path d="M3.500 2H7l1 3L4.500 27.500l-3 1z" fill="#f28a86" stroke="none" />
              <path d="M7 25l4-13h3l6 11-3 1-1.500-3-5 .5-.5 3z" fill="#8f0c11" stroke="none" />
              <path d="M9.500 22l3-7.500 1 0 3 5-5.500.5-1 2.500z" fill="#f5a29e" stroke="none" />
            </Svg>
            <Caret className="text-[#222]" />
          </button>
          <div className="min-w-0 flex-1">
            <TitleBar />
            <Tabs />
          </div>
        </div>
        <Ribbon />
        <div className="h-1.5 bg-[#646464]" />
        <Canvas />
        <Footer />
      </div>
    </div>
  );
}
